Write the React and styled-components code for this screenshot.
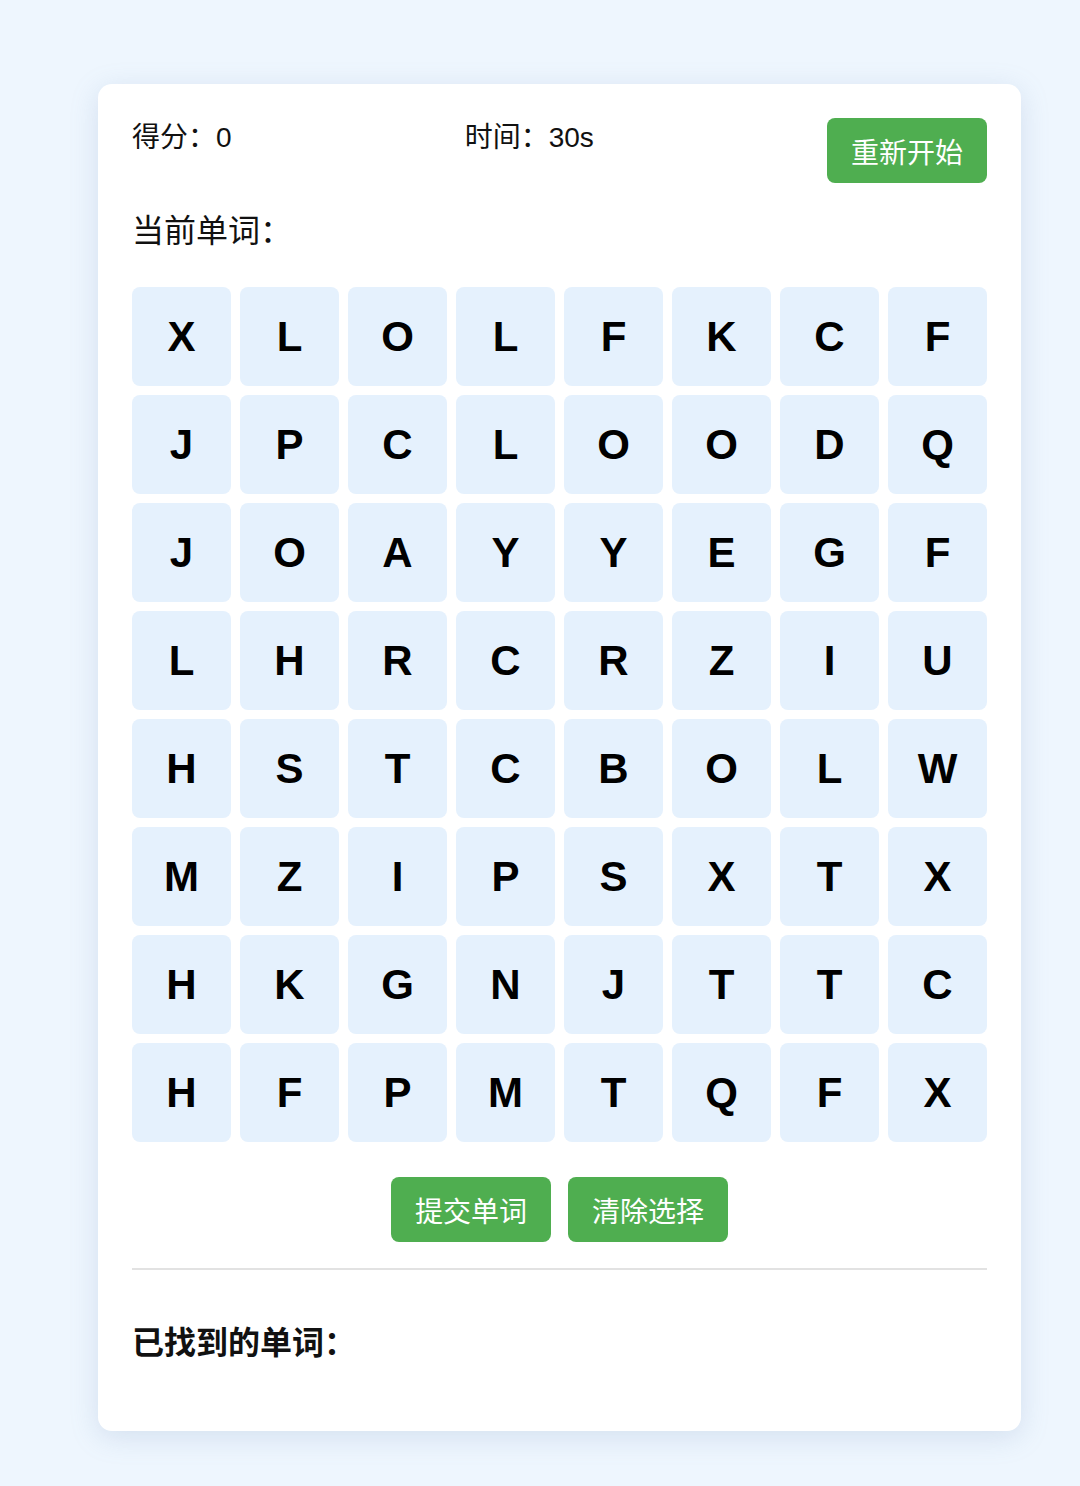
import React, { useState } from 'react';
import styled, { createGlobalStyle } from 'styled-components';

const GlobalStyle = createGlobalStyle`
  html, body {
    margin: 0;
    padding: 0;
    background: #eef6fe;
  }
  body {
    font-family: "Liberation Sans", "Noto Sans CJK SC", Arial, sans-serif;
    color: #111;
  }
`;

const Page = styled.div`
  min-height: 1486px;
  padding: 84px 0 0 98px;
  box-sizing: border-box;
`;

const Card = styled.div`
  width: 923px;
  box-sizing: border-box;
  padding: 34px 34px 69px;
  background: #fff;
  border-radius: 14px;
  box-shadow: 0 6px 28px rgba(120, 145, 185, 0.22);
`;

const Header = styled.div`
  display: flex;
  justify-content: space-between;
  align-items: flex-start;
`;

const Stat = styled.div`
  font-size: 28px;
  line-height: 40px;
`;

const Button = styled.button`
  height: 65px;
  padding: 0 24px;
  border: none;
  border-radius: 8px;
  background: #4fae50;
  color: #fff;
  font-family: inherit;
  font-size: 28px;
  cursor: pointer;
`;

const CurrentWord = styled.div`
  margin-top: 29px;
  font-size: 32px;
  line-height: 38px;
  min-height: 38px;
`;

const Grid = styled.div`
  margin-top: 37px;
  display: grid;
  grid-template-columns: repeat(8, 99px);
  grid-auto-rows: 99px;
  gap: 9px;
`;

const Cell = styled.div`
  display: flex;
  align-items: center;
  justify-content: center;
  border-radius: 8px;
  background: ${p => (p.$selected ? '#b9dcfb' : '#e5f1fd')};
  font-family: "Liberation Sans", Arial, sans-serif;
  font-weight: 700;
  font-size: 42px;
  color: #000;
  cursor: pointer;
  user-select: none;
`;

const Actions = styled.div`
  margin-top: 35px;
  display: flex;
  justify-content: center;
  gap: 17px;
`;

const Divider = styled.hr`
  margin: 26px 0 0;
  border: none;
  border-top: 2px solid #e2e2e2;
`;

const FoundTitle = styled.h3`
  margin: 54px 0 0;
  font-size: 32px;
  line-height: 38px;
  font-weight: 700;
`;

const letters = [
  'XLOLFKCF',
  'JPCLOODQ',
  'JOAYYEGF',
  'LHRCRZIU',
  'HSTCBOLW',
  'MZIPSXTX',
  'HKGNJTTC',
  'HFPMTQFX',
].join('').split('');

export default function App() {
  const [selected, setSelected] = useState([]);
  const word = selected.map(i => letters[i]).join('');

  const toggle = i =>
    setSelected(s => (s.includes(i) ? s.filter(x => x !== i) : [...s, i]));

  return (
    <>
      <GlobalStyle />
      <Page>
        <Card>
          <Header>
            <Stat>得分：0</Stat>
            <Stat>时间：30s</Stat>
            <Button onClick={() => setSelected([])}>重新开始</Button>
          </Header>
          <CurrentWord>当前单词：{word}</CurrentWord>
          <Grid>
            {letters.map((l, i) => (
              <Cell key={i} $selected={selected.includes(i)} onClick={() => toggle(i)}>
                {l}
              </Cell>
            ))}
          </Grid>
          <Actions>
            <Button>提交单词</Button>
            <Button onClick={() => setSelected([])}>清除选择</Button>
          </Actions>
          <Divider />
          <FoundTitle>已找到的单词：</FoundTitle>
        </Card>
      </Page>
    </>
  );
}
